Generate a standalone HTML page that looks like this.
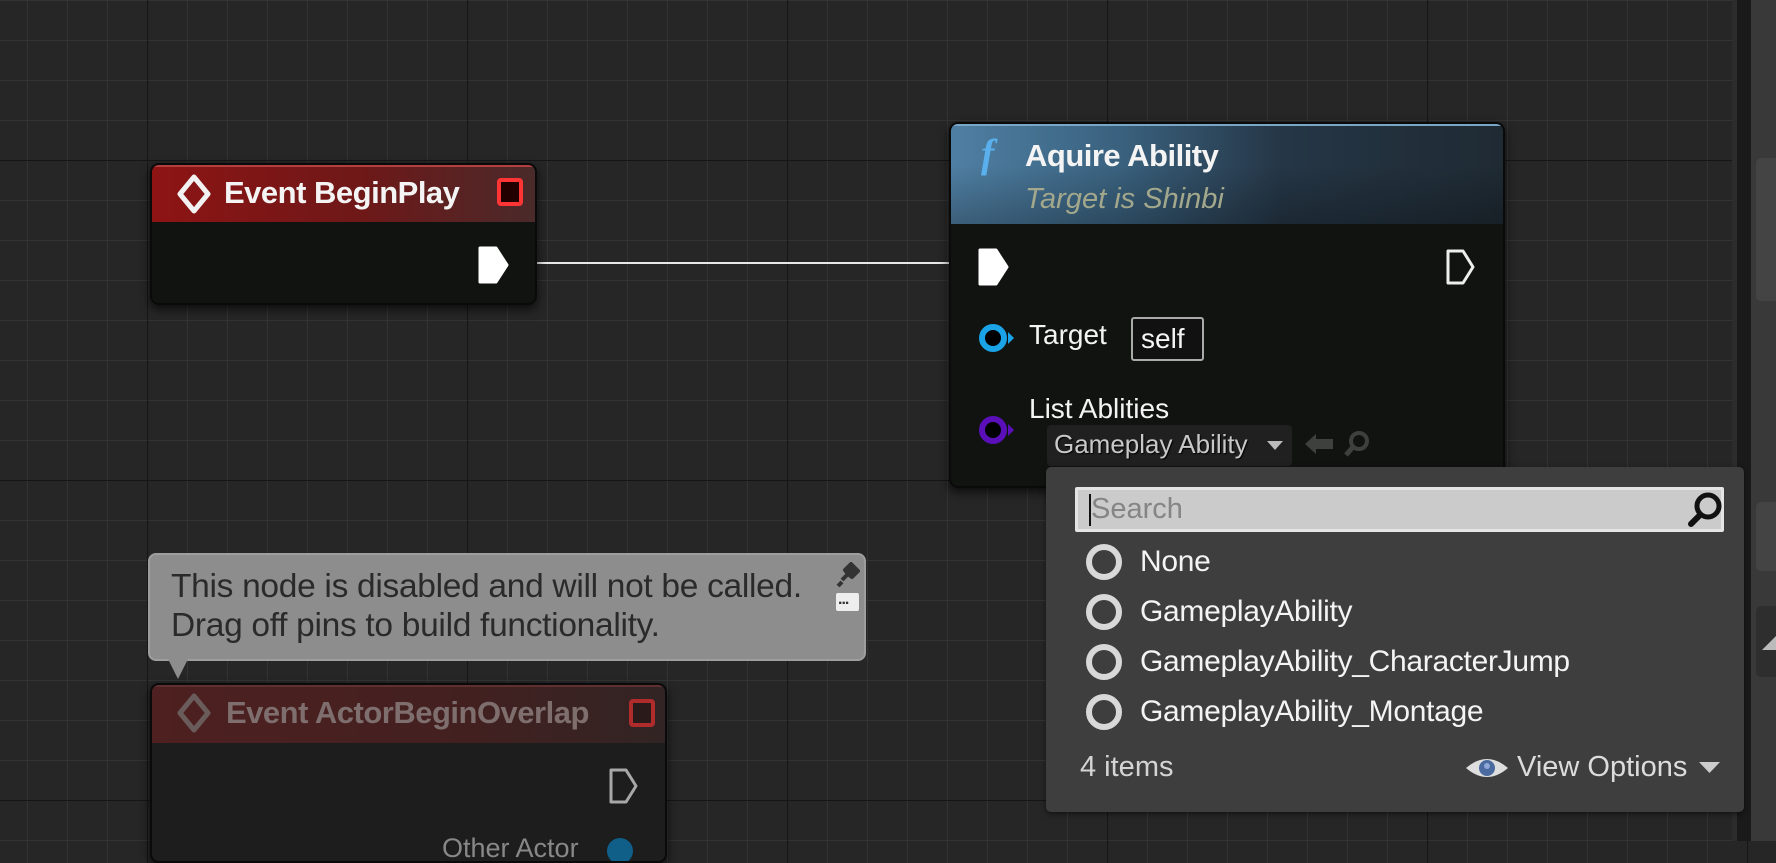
<!DOCTYPE html>
<html><head><meta charset="utf-8"><style>
*{margin:0;padding:0;box-sizing:border-box}
body{width:1776px;height:841px;overflow:hidden;position:relative;font-family:"Liberation Sans",sans-serif;
background-color:#262626;
background-image:
linear-gradient(90deg,#161616 0 1px,transparent 1px),
linear-gradient(180deg,#161616 0 1px,transparent 1px),
linear-gradient(90deg,#333 0 1px,transparent 1px),
linear-gradient(180deg,#333 0 1px,transparent 1px);
background-size:320px 100%,100% 320px,40px 100%,100% 40px;
background-position:147px 0,0 160px,27px 0,0 0;}
.abs{position:absolute}
.node{position:absolute;border-radius:9px;background:#111311;box-shadow:0 4px 10px rgba(0,0,0,.7);border:2px solid #0a0a0a;overflow:hidden}
.t{position:absolute;white-space:nowrap}
</style></head><body>

<div class="abs" style="left:1732px;top:0;width:5px;height:841px;background:#2c2c2c"></div>
<div class="abs" style="left:1737px;top:0;width:14px;height:841px;background:#1a1a1a"></div>
<div class="abs" style="left:1751px;top:0;width:25px;height:841px;background:#393939"></div>
<div class="abs" style="left:1756px;top:158px;width:20px;height:143px;background:#444;border-radius:5px 0 0 5px"></div>
<div class="abs" style="left:1756px;top:502px;width:20px;height:69px;background:#444;border-radius:5px 0 0 5px"></div>
<div class="abs" style="left:1756px;top:606px;width:20px;height:71px;background:#2e2e2e;border-radius:5px 0 0 5px"></div>
<svg class="abs" style="left:1762px;top:636px" width="14" height="14"><path d="M0 14 L14 0 L14 14Z" fill="#bbb"/></svg>

<div class="abs" style="left:505px;top:262px;width:475px;height:2px;background:#e8e8e8"></div>

<div class="node" style="left:150px;top:163px;width:387px;height:142px">
  <div class="abs" style="left:0;top:0;width:100%;height:57px;background:linear-gradient(90deg,#8e1414 0%,#6e1818 55%,#4a2a2a 100%);border-top:2px solid #b34040"></div>
  <svg class="abs" style="left:22px;top:9px" width="40" height="40"><path d="M20 3 L34 20 L20 37 L6 20Z" fill="none" stroke="#f2f2f2" stroke-width="5" stroke-linejoin="round"/></svg>
  <div class="t" style="left:72px;top:10px;font-size:31px;font-weight:bold;color:#f4f4f4;letter-spacing:-0.5px">Event BeginPlay</div>
  <div class="abs" style="left:345px;top:13px;width:26px;height:28px;border:4px solid #ff3535;border-radius:4px;background:#200"></div>
  <svg class="abs" style="left:326px;top:81px" width="32" height="38"><path d="M2 2 H18 L29 19 L18 36 H2Z" fill="#fff" stroke="#fff" stroke-width="3" stroke-linejoin="round"/></svg>
</div>

<div class="node" style="left:949px;top:122px;width:556px;height:366px">
  <div class="abs" style="left:0;top:0;width:100%;height:100px;background:linear-gradient(180deg,rgba(0,0,0,0) 40%,rgba(0,0,0,.25)),linear-gradient(90deg,#4f7fa3 0%,#3a627f 30%,#253646 60%,#1f2a33 100%);border-top:2px solid #7aa6c6"></div>
  <div class="t" style="left:30px;top:6px;font-size:40px;font-style:italic;font-family:'Liberation Serif',serif;color:#5ab0ec;font-weight:bold">f</div>
  <div class="t" style="left:74px;top:14px;font-size:31px;font-weight:bold;color:#f4f4f4;letter-spacing:-0.5px">Aquire Ability</div>
  <div class="t" style="left:74px;top:59px;font-size:29px;font-style:italic;color:#a3a88c">Target is Shinbi</div>
  <svg class="abs" style="left:27px;top:124px" width="32" height="38"><path d="M2 2 H18 L29 19 L18 36 H2Z" fill="#fff" stroke="#fff" stroke-width="3" stroke-linejoin="round"/></svg>
  <svg class="abs" style="left:494px;top:124px" width="32" height="38"><path d="M3 3 H18 L28 19 L18 35 H3Z" fill="none" stroke="#eee" stroke-width="3" stroke-linejoin="round"/></svg>
  <svg class="abs" style="left:27px;top:198px" width="40" height="32"><circle cx="15" cy="16" r="11" fill="#000" stroke="#1aa3e6" stroke-width="6"/><path d="M30 10 L36 16 L30 22Z" fill="#1aa3e6"/></svg>
  <div class="t" style="left:78px;top:195px;font-size:28px;color:#f4f4f4">Target</div>
  <div class="abs" style="left:180px;top:193px;width:73px;height:44px;border:2px solid #aaa;border-radius:3px;background:#111"></div>
  <div class="t" style="left:190px;top:199px;font-size:28px;color:#f4f4f4">self</div>
  <div class="t" style="left:78px;top:269px;font-size:28px;color:#f4f4f4">List Ablities</div>
  <svg class="abs" style="left:27px;top:290px" width="40" height="32"><circle cx="15" cy="16" r="11" fill="#000" stroke="#5a0fb8" stroke-width="6"/><path d="M30 10 L36 16 L30 22Z" fill="#5a0fb8"/></svg>
  <div class="abs" style="left:96px;top:301px;width:245px;height:41px;background:#1f201f;border-radius:4px"></div>
  <div class="t" style="left:103px;top:305px;font-size:26px;color:#c8c8c8;text-shadow:1px 1px 1px #000">Gameplay Ability</div>
  <svg class="abs" style="left:316px;top:317px" width="18" height="12"><path d="M0 0 H16 L8 9Z" fill="#bbb"/></svg>
  <svg class="abs" style="left:352px;top:308px" width="34" height="24"><path d="M2 12 L13 2 V7 H30 V17 H13 V22Z" fill="#3e403e"/></svg>
  <svg class="abs" style="left:390px;top:306px" width="32" height="28"><circle cx="18" cy="11" r="8" fill="none" stroke="#3e403e" stroke-width="4"/><path d="M12 17 L5 25" stroke="#3e403e" stroke-width="5"/></svg>
</div>

<div class="abs" style="left:148px;top:553px;width:718px;height:108px;background:#8d8d8d;border-radius:8px;border:2px solid #9e9e9e"></div>
<svg class="abs" style="left:168px;top:659px" width="20" height="22"><path d="M0 0 H20 L10 20Z" fill="#8d8d8d"/></svg>
<div class="t" style="left:171px;top:567px;font-size:33.5px;color:#2a2a2a;line-height:39px;letter-spacing:-0.3px">This node is disabled and will not be called.<br>Drag off pins to build functionality.</div>
<svg class="abs" style="left:834px;top:562px" width="26" height="26"><path d="M8 20 L4 24 M8 18 L14 12 L11 8 L17 2 L24 9 L18 15 L14 12" stroke="#333" stroke-width="4" fill="#333" stroke-linejoin="round"/></svg>
<div class="abs" style="left:836px;top:593px;width:23px;height:18px;background:#eee;border-radius:2px"></div>
<div class="t" style="left:838px;top:591px;font-size:16px;color:#333;font-weight:bold;letter-spacing:-1px">...</div>

<div class="node" style="left:150px;top:683px;width:517px;height:180px;background:#1c1d1c">
  <div class="abs" style="left:0;top:0;width:100%;height:58px;background:linear-gradient(90deg,#4e2020 0%,#432020 60%,#322424 100%);border-top:2px solid #5e3030"></div>
  <svg class="abs" style="left:22px;top:8px" width="40" height="40"><path d="M20 3 L34 20 L20 37 L6 20Z" fill="none" stroke="#6b5c5c" stroke-width="5" stroke-linejoin="round"/></svg>
  <div class="t" style="left:74px;top:10px;font-size:31px;font-weight:bold;color:#7e6e6e;letter-spacing:-0.5px">Event ActorBeginOverlap</div>
  <div class="abs" style="left:477px;top:14px;width:26px;height:28px;border:4px solid #b02c2c;border-radius:4px;background:#2a1a1a"></div>
  <svg class="abs" style="left:456px;top:82px" width="32" height="38"><path d="M3 3 H18 L28 19 L18 35 H3Z" fill="none" stroke="#a8a8a8" stroke-width="3" stroke-linejoin="round"/></svg>
  <div class="t" style="left:290px;top:148px;font-size:27px;color:#888">Other Actor</div>
  <div class="abs" style="left:455px;top:153px;width:26px;height:26px;border-radius:50%;background:#0f5f88"></div>
</div>

<div class="abs" style="left:1046px;top:467px;width:698px;height:345px;background:#3e3e3e;border-radius:5px;box-shadow:0 2px 6px rgba(0,0,0,.5)"></div>
<div class="abs" style="left:1075px;top:487px;width:649px;height:45px;background:#cbcbcb;border:3px solid #e4e4e4;border-radius:2px"></div>
<div class="abs" style="left:1089px;top:494px;width:2px;height:32px;background:#111"></div>
<div class="t" style="left:1091px;top:493px;font-size:29px;color:#858585">Search</div>
<svg class="abs" style="left:1686px;top:490px" width="38" height="40"><circle cx="22" cy="16" r="11" fill="none" stroke="#111" stroke-width="5"/><path d="M14 25 L5 34" stroke="#111" stroke-width="6" stroke-linecap="round"/></svg>

<svg class="abs" style="left:1085px;top:543px" width="40" height="40"><circle cx="19" cy="19" r="15" fill="none" stroke="#d8d8d8" stroke-width="6"/></svg>
<div class="t" style="left:1140px;top:545px;font-size:30px;color:#f4f4f4;letter-spacing:-0.3px">None</div>
<svg class="abs" style="left:1085px;top:593px" width="40" height="40"><circle cx="19" cy="19" r="15" fill="none" stroke="#d8d8d8" stroke-width="6"/></svg>
<div class="t" style="left:1140px;top:595px;font-size:30px;color:#f4f4f4;letter-spacing:-0.3px">GameplayAbility</div>
<svg class="abs" style="left:1085px;top:643px" width="40" height="40"><circle cx="19" cy="19" r="15" fill="none" stroke="#d8d8d8" stroke-width="6"/></svg>
<div class="t" style="left:1140px;top:645px;font-size:30px;color:#f4f4f4;letter-spacing:-0.3px">GameplayAbility_CharacterJump</div>
<svg class="abs" style="left:1085px;top:693px" width="40" height="40"><circle cx="19" cy="19" r="15" fill="none" stroke="#d8d8d8" stroke-width="6"/></svg>
<div class="t" style="left:1140px;top:695px;font-size:30px;color:#f4f4f4;letter-spacing:-0.3px">GameplayAbility_Montage</div>

<div class="t" style="left:1080px;top:751px;font-size:29px;color:#d4d4d4">4 items</div>
<svg class="abs" style="left:1464px;top:754px" width="46" height="28"><path d="M2 14 Q23 -4 44 14 Q23 32 2 14Z" fill="#dedede"/><circle cx="23" cy="14" r="8" fill="#4a6aa0"/><circle cx="23" cy="12" r="3" fill="#8fa8d8"/></svg>
<div class="t" style="left:1517px;top:751px;font-size:29px;color:#dcdcdc">View Options</div>
<svg class="abs" style="left:1699px;top:762px" width="22" height="14"><path d="M0 0 H21 L10.5 11Z" fill="#ccc"/></svg>

</body></html>
